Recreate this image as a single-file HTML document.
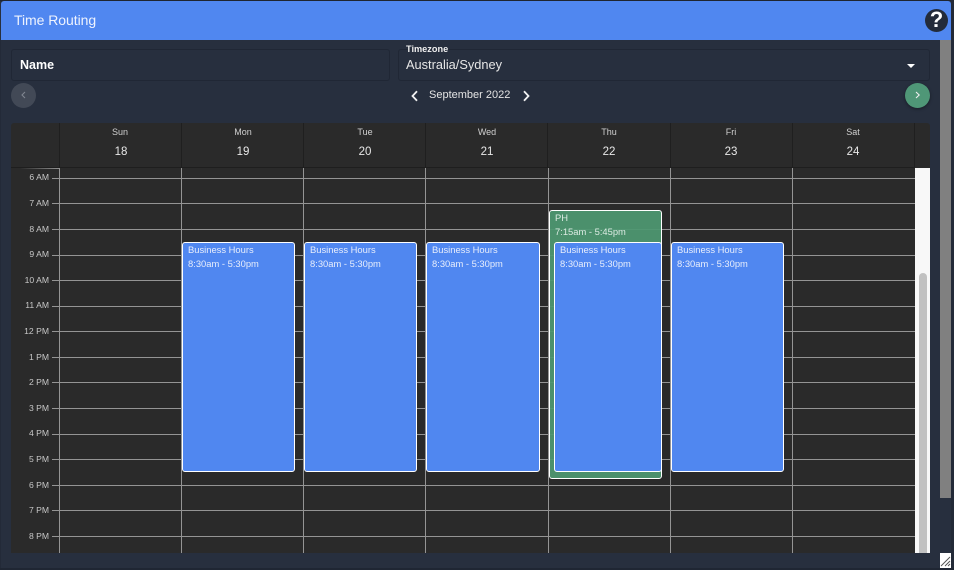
<!DOCTYPE html>
<html><head><meta charset="utf-8">
<style>
html,body{margin:0;padding:0;width:954px;height:570px;overflow:hidden;background:#2a2a2a}
*{box-sizing:border-box}
div{position:absolute}
body{font-family:"Liberation Sans",sans-serif;color:#fff}
#dlg{left:0;top:0;width:954px;height:570px;background:#272f3e;overflow:hidden}
.t{white-space:nowrap;line-height:1}
.c{text-align:center}
.v{background:#949494;width:1px;top:168px;height:385px}
.h{background:#949494;height:1px;left:59px;width:856px}
.tk{background:#949494;height:1px;left:52px;width:7px}
.lb{left:11px;width:38px;text-align:right;font-size:8.6px;color:#c8c8c8;line-height:10px;white-space:nowrap}
.dn{font-size:9px;color:#d0d0d0;width:122px;top:127px;text-align:center;line-height:10px}
.dd{font-size:11.5px;color:#e8e8e8;width:122px;top:145px;text-align:center;line-height:13px}
.hv{background:#1f1f1f;width:1px;top:123px;height:44px}
.ev{background:#5087f0;border:1px solid #fff;border-radius:3px;font-size:9.4px;line-height:14px;color:#e8eefc;padding:0 0 0 5px;white-space:nowrap}
.ev span{display:block;height:14px}
</style></head>
<body>
<div id="dlg">
 <div style="left:0;top:0;width:954px;height:1px;background:#1f2530"></div>
 <div style="left:1px;top:1px;width:950px;height:39px;background:#5087f0;border-radius:3px 3px 0 0"></div>
 <div class="t" style="left:14px;top:13px;font-size:14px;letter-spacing:-.05px;color:#eef3fe">Time Routing</div>
 <div style="left:925px;top:9px;width:23px;height:23px;border-radius:50%;background:#232b3a"></div>
 <div class="t c" style="left:925px;top:9px;width:23px;font-size:22px;font-weight:bold;color:#fff">?</div>

 <div style="left:951px;top:0;width:3px;height:570px;background:#232a38"></div>
 <div style="left:0;top:40px;width:1px;height:530px;background:#232a38"></div>
 <div style="left:0;top:568px;width:954px;height:2px;background:#1f2633"></div>

 <div style="left:940px;top:40px;width:11px;height:458px;background:#808080"></div>
 <div style="left:940px;top:553px;width:11px;height:15px;background:#fff"></div>
 <svg style="position:absolute;left:940px;top:553px" width="11" height="15"><path d="M1 13L10 4M5 13L10 8M8 13L10 11" stroke="#555" stroke-width="1" fill="none"/></svg>

 <div style="left:11px;top:49px;width:379px;height:32px;border:1px solid #202735;border-radius:3px"></div>
 <div class="t" style="left:20px;top:59px;font-size:12.5px;font-weight:bold">Name</div>
 <div style="left:398px;top:49px;width:532px;height:32px;border:1px solid #202735;border-radius:3px"></div>
 <div class="t" style="left:406px;top:45px;font-size:9.2px;font-weight:bold;color:#f0f0f0">Timezone</div>
 <div class="t" style="left:406px;top:59px;font-size:12.8px;color:#e6e6e6">Australia/Sydney</div>
 <svg style="position:absolute;left:907px;top:64px" width="8" height="4"><path d="M0 0H8L4 4Z" fill="#fff"/></svg>

 <div style="left:11px;top:83px;width:25px;height:25px;border-radius:50%;background:#424956"></div>
 <svg style="position:absolute;left:11px;top:83px" width="25" height="25"><path d="M14 9L11 12L14 15" stroke="#7f8590" stroke-width="1.100" fill="none"/></svg>
 <div style="left:905px;top:83px;width:25px;height:25px;border-radius:50%;background:#4f9777;box-shadow:0 1px 3px rgba(0,0,0,.4)"></div>
 <svg style="position:absolute;left:905px;top:83px" width="25" height="25"><path d="M11 9L14.200 12L11 15" stroke="#f0f0f0" stroke-width="1.100" fill="none"/></svg>
 <svg style="position:absolute;left:410px;top:90px" width="10" height="12"><path d="M7 1.200L2.500 6L7 10.800" stroke="#f2f2f2" stroke-width="1.800" fill="none"/></svg>
 <svg style="position:absolute;left:522px;top:90px" width="10" height="12"><path d="M2 1.200L6.500 6L2 10.800" stroke="#f2f2f2" stroke-width="1.800" fill="none"/></svg>
 <div class="t" style="left:429px;top:89.500px;font-size:11px;color:#e4e4e4">September 2022</div>

 <div style="left:11px;top:123px;width:919px;height:430px;background:#2a2a2a;border-radius:3px 3px 0 0"></div>
 <div style="left:11px;top:167px;width:904px;height:1px;background:#1e1e1e"></div>
 <div class="hv" style="left:59px"></div><div class="hv" style="left:181px"></div><div class="hv" style="left:303px"></div><div class="hv" style="left:425px"></div><div class="hv" style="left:547px"></div><div class="hv" style="left:670px"></div><div class="hv" style="left:792px"></div><div class="hv" style="left:914px"></div>

 <div class="dn" style="left:59px">Sun</div><div class="dd" style="left:60px;top:146px">18</div>
 <div class="dn" style="left:182px">Mon</div><div class="dd" style="left:182px;top:146px">19</div>
 <div class="dn" style="left:304px">Tue</div><div class="dd" style="left:304px;top:146px">20</div>
 <div class="dn" style="left:426px">Wed</div><div class="dd" style="left:426px;top:146px">21</div>
 <div class="dn" style="left:548px">Thu</div><div class="dd" style="left:548px;top:146px">22</div>
 <div class="dn" style="left:670px">Fri</div><div class="dd" style="left:670px;top:146px">23</div>
 <div class="dn" style="left:792px">Sat</div><div class="dd" style="left:792px;top:146px">24</div>

 <div class="v" style="left:59px"></div><div class="v" style="left:181px"></div><div class="v" style="left:303px"></div><div class="v" style="left:425px"></div><div class="v" style="left:548px"></div><div class="v" style="left:670px"></div><div class="v" style="left:792px"></div>
 <div style="left:20px;top:168px;width:40px;height:1px;background:linear-gradient(90deg,#2a2a2a,#949494)"></div>

 <div class="h" style="top:178px"></div><div class="tk" style="top:178px"></div><div class="lb" style="top:172px">6 AM</div>
 <div class="h" style="top:203px"></div><div class="tk" style="top:203px"></div><div class="lb" style="top:198px">7 AM</div>
 <div class="h" style="top:229px"></div><div class="tk" style="top:229px"></div><div class="lb" style="top:224px">8 AM</div>
 <div class="h" style="top:255px"></div><div class="tk" style="top:255px"></div><div class="lb" style="top:249px">9 AM</div>
 <div class="h" style="top:280px"></div><div class="tk" style="top:280px"></div><div class="lb" style="top:275px">10 AM</div>
 <div class="h" style="top:306px"></div><div class="tk" style="top:306px"></div><div class="lb" style="top:300px">11 AM</div>
 <div class="h" style="top:331px"></div><div class="tk" style="top:331px"></div><div class="lb" style="top:326px">12 PM</div>
 <div class="h" style="top:357px"></div><div class="tk" style="top:357px"></div><div class="lb" style="top:352px">1 PM</div>
 <div class="h" style="top:382px"></div><div class="tk" style="top:382px"></div><div class="lb" style="top:377px">2 PM</div>
 <div class="h" style="top:408px"></div><div class="tk" style="top:408px"></div><div class="lb" style="top:403px">3 PM</div>
 <div class="h" style="top:434px"></div><div class="tk" style="top:434px"></div><div class="lb" style="top:428px">4 PM</div>
 <div class="h" style="top:459px"></div><div class="tk" style="top:459px"></div><div class="lb" style="top:454px">5 PM</div>
 <div class="h" style="top:485px"></div><div class="tk" style="top:485px"></div><div class="lb" style="top:480px">6 PM</div>
 <div class="h" style="top:510px"></div><div class="tk" style="top:510px"></div><div class="lb" style="top:505px">7 PM</div>
 <div class="h" style="top:536px"></div><div class="tk" style="top:536px"></div><div class="lb" style="top:531px">8 PM</div>

 <div class="ev" style="left:182px;top:242px;width:113px;height:230px"><span>Business Hours</span><span>8:30am - 5:30pm</span></div>
 <div class="ev" style="left:304px;top:242px;width:113px;height:230px"><span>Business Hours</span><span>8:30am - 5:30pm</span></div>
 <div class="ev" style="left:426px;top:242px;width:114px;height:230px"><span>Business Hours</span><span>8:30am - 5:30pm</span></div>
 <div class="ev" style="left:549px;top:210px;width:113px;height:269px;background:rgba(78,152,113,.93);color:#dcebe3"><span>PH</span><span>7:15am - 5:45pm</span></div>
 <div class="ev" style="left:554px;top:242px;width:108px;height:230px"><span>Business Hours</span><span>8:30am - 5:30pm</span></div>
 <div class="ev" style="left:671px;top:242px;width:113px;height:230px"><span>Business Hours</span><span>8:30am - 5:30pm</span></div>

 <div style="left:915px;top:168px;width:15px;height:385px;background:#f8f8f8"></div>
 <div style="left:919px;top:273px;width:8px;height:280px;background:#c1c1c1;border-radius:4px 4px 0 0"></div>
</div>
</body></html>
